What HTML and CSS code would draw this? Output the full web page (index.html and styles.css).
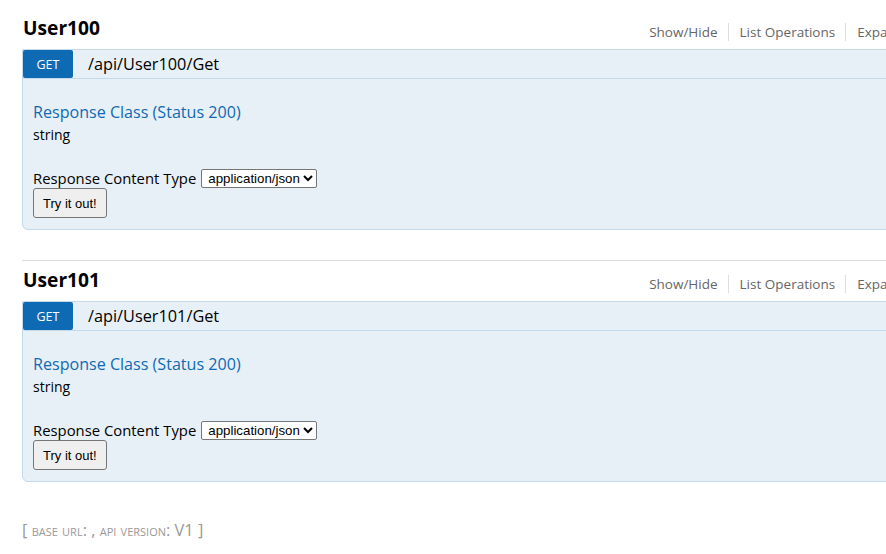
FILE: index.html
```html
<!DOCTYPE html>
<html>
<head>
<meta charset="utf-8">
<link rel="stylesheet" href="styles.css">
</head>
<body>
<div class="wrap">
  <section class="resource">
    <div class="res-head">
      <h2 class="res-title">User100</h2>
      <ul class="options">
        <li>Show/Hide</li>
        <li>List Operations</li>
        <li>Expand Operations</li>
      </ul>
    </div>
    <div class="operation">
      <div class="op-head">
        <span class="verb">GET</span>
        <span class="path">/api/User100/Get</span>
      </div>
      <div class="op-content">
        <h4 class="resp-title">Response Class (Status 200)</h4>
        <div class="resp-type">string</div>
        <div class="ctype">
          <label class="ctype-label">Response Content Type</label>
          <select class="ctype-select"><option>application/json</option></select>
        </div>
        <button class="try">Try it out!</button>
      </div>
    </div>
  </section>
  <section class="resource">
    <div class="res-head">
      <h2 class="res-title">User101</h2>
      <ul class="options">
        <li>Show/Hide</li>
        <li>List Operations</li>
        <li>Expand Operations</li>
      </ul>
    </div>
    <div class="operation">
      <div class="op-head">
        <span class="verb">GET</span>
        <span class="path">/api/User101/Get</span>
      </div>
      <div class="op-content">
        <h4 class="resp-title">Response Class (Status 200)</h4>
        <div class="resp-type">string</div>
        <div class="ctype">
          <label class="ctype-label">Response Content Type</label>
          <select class="ctype-select"><option>application/json</option></select>
        </div>
        <button class="try">Try it out!</button>
      </div>
    </div>
  </section>
  <div class="footer">[ <span class="sc">base url</span>: , <span class="sc">api version</span>: V1 ]</div>
</div>
</body>
</html>
```

FILE: styles.css
```css
html, body {
  margin: 0;
  padding: 0;
  overflow: hidden;
  background: #fff;
}
body {
  font-family: "Open Sans", "Noto Sans", sans-serif;
  color: #000;
}
.wrap {
  width: 966px;
  padding-left: 22px;
  padding-top: 14px;
}
.resource {
  padding-bottom: 30px;
}
.resource + .resource {
  border-top: 1px solid #ddd;
  padding-top: 5px;
}
.res-head {
  display: flex;
  justify-content: space-between;
  align-items: flex-end;
  padding-bottom: 7px;
}
.res-title {
  margin: 0 0 0 1px;
  font-size: 19.2px;
  font-weight: 700;
  line-height: 28px;
}
.options {
  list-style: none;
  margin: 0 0 1px 0;
  padding: 0;
  display: flex;
  font-size: 13.5px;
  color: #666;
  line-height: 18px;
}
.options li {
  padding: 0 10px 0 11px;
  border-left: 1px solid #ddd;
}
.options li:first-child {
  border-left: none;
}
.operation {
  border: 1px solid #c3d9ec;
  border-radius: 0 0 6px 6px;
  background: #e7f0f7;
}
.op-head {
  display: flex;
  align-items: center;
  height: 28px;
  border-bottom: 1px solid #c3d9ec;
}
.verb {
  width: 50px;
  height: 28px;
  background: #0f6ab4;
  color: #fff;
  border-radius: 2px;
  font-size: 12.5px;
  display: flex;
  align-items: center;
  justify-content: center;
}
.path {
  margin-left: 15px;
  font-size: 16.3px;
}
.op-content {
  padding: 22px 10px 11px 10px;
}
.resp-title {
  margin: 0;
  font-size: 16.1px;
  font-weight: 400;
  color: #0f6ab4;
  line-height: 22px;
}
.resp-type {
  font-size: 14px;
  line-height: 23px;
  color: #000;
}
.ctype {
  margin-top: 22px;
  display: flex;
  align-items: center;
  font-size: 14.85px;
  line-height: 20px;
}
.ctype-label {
  margin-right: 5px;
}
.ctype-select {
  font-family: "Liberation Sans", Arial, sans-serif;
  font-size: 13.3px;
  height: 19px;
  padding: 0 0 0 2px;
  border: 1px solid #767676;
  border-radius: 2px;
  background: #fff;
  color: #000;
}
.try {
  display: block;
  font-family: "Liberation Sans", Arial, sans-serif;
  font-size: 13px;
  height: 30px;
  padding: 0 9px;
  border: 1px solid #767676;
  border-radius: 3px;
  background: #efefef;
  color: #000;
}
.footer {
  margin-top: 6px;
  font-size: 16.4px;
  line-height: 24px;
  color: #999;
}
.sc {
  font-variant: small-caps;
}
```
